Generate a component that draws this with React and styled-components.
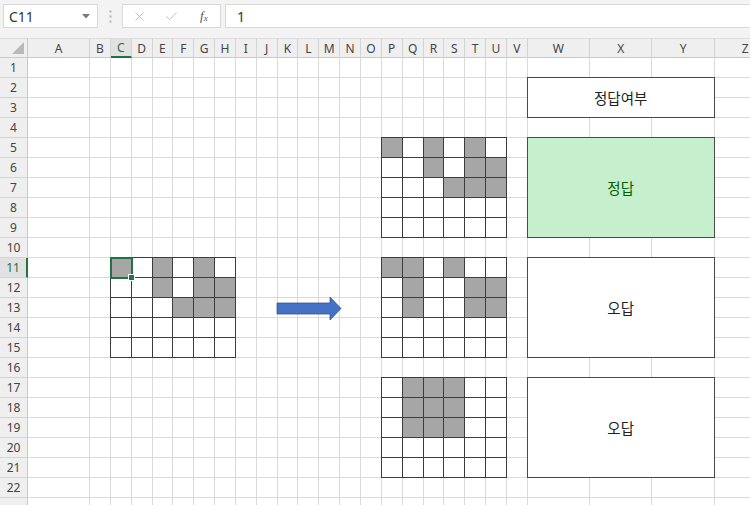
import React from 'react';
import styled, { createGlobalStyle } from 'styled-components';
import { X, Check } from 'lucide-react';

const GlobalStyle = createGlobalStyle`
  html, body {
    margin: 0;
    padding: 0;
    background: #fff;
  }
  body {
    width: 750px;
    height: 505px;
    overflow: hidden;
    font-family: "Noto Sans", "Noto Sans CJK KR", sans-serif;
  }
`;

const COLS = '28px 62px repeat(21, 20.857px) repeat(3, 62.333px) 62px';
const ROWS = '20px repeat(23, 20px)';
const LETTERS = 'ABCDEFGHIJKLMNOPQRSTUVWXYZ'.split('');
const ROW_COUNT = 23;
const LAST_FULL_ROW = 22;
const ACTIVE_COL = 'C';
const ACTIVE_ROW = 11;
const GREEN = '#217346';

// shaded cells per row of each 6x5 pattern
const QUESTION = [[0, 2, 4], [2, 4, 5], [3, 4, 5], [], []];
const CANDIDATES = [
  { row: 5, shaded: QUESTION },
  { row: 11, shaded: [[0, 1, 3], [1, 4, 5], [1, 4, 5], [], []] },
  { row: 17, shaded: [[1, 2, 3], [1, 2, 3], [1, 2, 3], [], []] },
];
const RESULTS = [
  { row: 2, height: 2, text: '정답여부' },
  { row: 5, height: 5, text: '정답', good: true },
  { row: 11, height: 5, text: '오답' },
  { row: 17, height: 5, text: '오답' },
];

const col = (letter) => LETTERS.indexOf(letter) + 2;

const Window = styled.div`
  width: 750px;
  height: 505px;
  overflow: hidden;
  background: #f3f3f3;
  display: flex;
  flex-direction: column;
`;

const FormulaBar = styled.div`
  height: 38px;
  flex: none;
  box-sizing: border-box;
  padding: 4px 0 0 3px;
  display: flex;
  align-items: flex-start;
`;

const Field = styled.div`
  height: 24px;
  box-sizing: border-box;
  background: #fff;
  border: 1px solid #d9d9d9;
  display: flex;
  align-items: center;
  color: #333;
  font-size: 14px;
`;

const NameBox = styled(Field)`
  width: 95px;
  padding: 0 7px 0 5px;
  justify-content: space-between;
`;

const Grip = styled.div`
  width: 24px;
  height: 24px;
  display: flex;
  align-items: center;
  justify-content: center;
`;

const Buttons = styled(Field)`
  width: 99px;
`;

const IconButton = styled.div`
  flex: 1;
  display: flex;
  align-items: center;
  justify-content: center;
  color: ${(p) => (p.$dim ? '#bdbdbd' : '#555')};
`;

const Fx = styled.span`
  font-family: "Liberation Serif", serif;
  font-style: italic;
  font-size: 13px;
  color: #555;
  sub {
    font-size: 9px;
    vertical-align: -1px;
  }
`;

const Input = styled(Field)`
  flex: 1;
  margin-left: 4px;
  padding-left: 11px;
  border-right: none;
`;

const Sheet = styled.div`
  flex: 1;
  overflow: hidden;
  display: grid;
  align-items: start;
  & > * {
    grid-area: 1 / 1;
  }
`;

const Layer = styled.div`
  display: grid;
  grid-template-columns: ${COLS};
  grid-template-rows: ${ROWS};
  pointer-events: ${(p) => (p.$overlay ? 'none' : 'auto')};
`;

const Head = styled.div`
  box-sizing: border-box;
  display: flex;
  align-items: center;
  justify-content: center;
  font-size: 12px;
  background: ${(p) => (p.$active ? '#e1e1e1' : '#efefef')};
  color: ${(p) => (p.$active ? GREEN : '#444')};
`;

const ColHead = styled(Head)`
  border-top: 1px solid #dcdcdc;
  border-right: 1px solid #d4d4d4;
  border-bottom: ${(p) => (p.$active ? `2px solid ${GREEN}` : '1px solid #c9c9c9')};
`;

const RowHead = styled(Head)`
  border-bottom: 1px solid #d4d4d4;
  border-right: ${(p) => (p.$active ? `2px solid ${GREEN}` : '1px solid #c9c9c9')};
`;

const Corner = styled(Head)`
  border-top: 1px solid #dcdcdc;
  border-right: 1px solid #c9c9c9;
  border-bottom: 1px solid #c9c9c9;
  justify-content: flex-end;
  align-items: flex-end;
  padding: 0 3px 3px 0;
`;

const Cell = styled.div`
  box-sizing: border-box;
  background: #fff;
  border-right: 1px solid #dadada;
  border-bottom: 1px solid #dadada;
`;

const Spot = styled.div`
  grid-column: ${(p) => p.$col} / span ${(p) => p.$w || 1};
  grid-row: ${(p) => p.$row + 1} / span ${(p) => p.$h || 1};
`;

const Pattern = styled(Spot)`
  margin: -1px 0 0 -1px;
  display: grid;
  grid-template-columns: repeat(6, 1fr);
  grid-template-rows: repeat(5, 1fr);
  border-left: 1px solid #3d3d3d;
  border-top: 1px solid #3d3d3d;
`;

const PatternCell = styled.div`
  border-right: 1px solid #3d3d3d;
  border-bottom: 1px solid #3d3d3d;
  background: ${(p) => (p.$on ? '#a6a6a6' : '#fff')};
`;

const ResultBox = styled(Spot)`
  margin: -1px 0 0 -1px;
  border: 1px solid #4a4a4a;
  background: ${(p) => (p.$good ? '#c6efce' : '#fff')};
  color: ${(p) => (p.$good ? '#006100' : '#222')};
  display: flex;
  align-items: center;
  justify-content: center;
  font-family: "Noto Sans CJK KR", sans-serif;
  font-size: 14.5px;
`;

const Selection = styled(Spot)`
  margin: -1px;
  border: 2px solid ${GREEN};
  position: relative;
`;

const FillHandle = styled.div`
  position: absolute;
  right: -4px;
  bottom: -4px;
  width: 5px;
  height: 5px;
  background: ${GREEN};
  border: 1px solid #fff;
`;

const Caret = () => (
  <svg width="8" height="5" viewBox="0 0 8 5">
    <path d="M0 0h8L4 4.5z" fill="#7a7a7a" />
  </svg>
);

const Dots = () => (
  <svg width="3" height="13" viewBox="0 0 3 13">
    <rect x="0.5" y="0.5" width="2" height="2" fill="#b5b5b5" />
    <rect x="0.5" y="5.5" width="2" height="2" fill="#b5b5b5" />
    <rect x="0.5" y="10.5" width="2" height="2" fill="#b5b5b5" />
  </svg>
);

const CornerMark = () => (
  <svg width="12" height="12" viewBox="0 0 12 12">
    <path d="M12 0v12H0z" fill="#b9b9b9" />
  </svg>
);

const Arrow = () => (
  <svg width="63" height="20" viewBox="0 0 63 20" style={{ overflow: 'visible' }}>
    <path
      d="M-1 5H52V-1L63 10.5L52 22V16H-1Z"
      fill="#4472c4"
      stroke="#2f528f"
      strokeWidth="0.75"
    />
  </svg>
);

const Grid = ({ row, column, shaded }) => (
  <Pattern $row={row} $col={column} $w={6} $h={5}>
    {shaded.map((on, r) =>
      [0, 1, 2, 3, 4, 5].map((c) => <PatternCell key={`${r}-${c}`} $on={on.includes(c)} />)
    )}
  </Pattern>
);

export default function App() {
  const rows = Array.from({ length: ROW_COUNT }, (_, i) => i + 1);

  return (
    <Window>
      <GlobalStyle />
      <FormulaBar>
        <NameBox>
          <span>C11</span>
          <Caret />
        </NameBox>
        <Grip>
          <Dots />
        </Grip>
        <Buttons>
          <IconButton $dim>
            <X size={15} strokeWidth={1.5} />
          </IconButton>
          <IconButton $dim>
            <Check size={15} strokeWidth={1.5} />
          </IconButton>
          <IconButton>
            <Fx>
              f<sub>x</sub>
            </Fx>
          </IconButton>
        </Buttons>
        <Input>1</Input>
      </FormulaBar>

      <Sheet>
        <Layer>
          <Corner>
            <CornerMark />
          </Corner>
          {LETTERS.map((l) => (
            <ColHead key={l} $active={l === ACTIVE_COL}>
              {l}
            </ColHead>
          ))}
          {rows.map((r) => (
            <React.Fragment key={r}>
              {/* the last row is clipped by the window edge, its number is not visible */}
              <RowHead $active={r === ACTIVE_ROW}>{r <= LAST_FULL_ROW ? r : ''}</RowHead>
              {LETTERS.map((l) => (
                <Cell key={l} />
              ))}
            </React.Fragment>
          ))}
        </Layer>

        <Layer $overlay>
          <Grid row={11} column={col('C')} shaded={QUESTION} />
          <Spot $row={13} $col={col('K')} $w={3}>
            <Arrow />
          </Spot>
          {CANDIDATES.map((g) => (
            <Grid key={g.row} row={g.row} column={col('P')} shaded={g.shaded} />
          ))}
          {RESULTS.map((b) => (
            <ResultBox key={b.row} $row={b.row} $col={col('W')} $w={3} $h={b.height} $good={b.good}>
              {b.text}
            </ResultBox>
          ))}
          <Selection $row={ACTIVE_ROW} $col={col(ACTIVE_COL)}>
            <FillHandle />
          </Selection>
        </Layer>
      </Sheet>
    </Window>
  );
}
